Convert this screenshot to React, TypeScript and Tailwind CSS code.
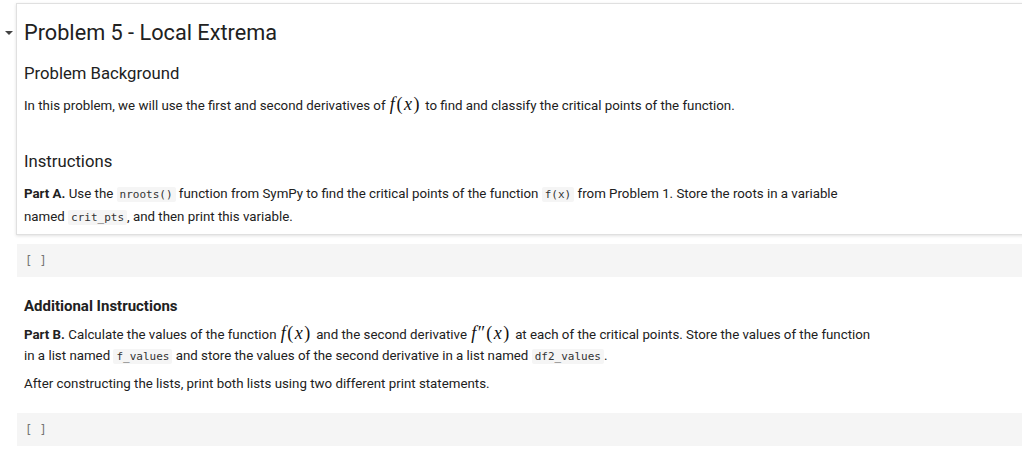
import React from "react";

const Math = ({ children }: { children: React.ReactNode }) => (
  <span className="text-[18px] leading-[1] tracking-[1.5px] text-[#111] mx-[1px]" style={{ fontFamily: '"Liberation Serif", "DejaVu Serif", serif' }}>
    {children}
  </span>
);

const Code = ({ children }: { children: React.ReactNode }) => (
  <code className="bg-[#f5f5f5] px-[3px] py-[1px] rounded-[2px] text-[11px] leading-[1] text-[#333] [font-family:'DejaVu_Sans_Mono',monospace]">
    {children}
  </code>
);

const Fx = () => (
  <Math>
    <i>f</i>(<i>x</i>)
  </Math>
);

const CodeCell = () => (
  <div className="ml-[17px] h-[33px] bg-[#f5f5f5] flex items-center pl-[8px]">
    <span className="text-[12px] text-[#757575] [font-family:'DejaVu_Sans_Mono',monospace]">[ ]</span>
  </div>
);

export default function App() {
  return (
    <div className="w-[1022px] h-[460px] bg-white overflow-hidden text-[#212121] [font-family:Roboto,'Noto_Sans',sans-serif]">
      <div className="pt-[3px]">
        <div className="relative ml-[16px] mr-[-10px] bg-white border border-[#e0e0e0] shadow-[0_1px_3px_rgba(0,0,0,0.12)] pl-[7px] pt-[15px] pb-[6px]">
          <span className="absolute left-[-12px] top-[27px] w-0 h-0 border-l-[4px] border-r-[4px] border-t-[4px] border-l-transparent border-r-transparent border-t-[#444]" />
          <h1 className="text-[21.7px] leading-[28px] font-normal text-[#212121]">Problem 5 - Local Extrema</h1>
          <h2 className="mt-[15px] text-[16.7px] leading-[24px] font-normal text-[#212121]">Problem Background</h2>
          <p className="mt-[9px] text-[13.3px] leading-[20px] text-[#212121]">
            In this problem, we will use the first and second derivatives of <Fx /> to find and classify the critical points of the function.
          </p>
          <h2 className="mt-[34px] text-[16.7px] leading-[24px] font-normal text-[#212121]">Instructions</h2>
          <p className="mt-[8px] text-[13.3px] leading-[23px]">
            <b className="font-bold">Part A.</b> Use the <Code>nroots()</Code> function from SymPy to find the critical points of the function <Code>f(x)</Code> from Problem 1. Store the roots in a variable
            <br />
            named <Code>crit_pts</Code>, and then print this variable.
          </p>
        </div>
      </div>
      <div className="mt-[9px]">
        <CodeCell />
      </div>
      <div className="pl-[24px]">
        <h3 className="mt-[19px] text-[15px] leading-[20px] font-bold">Additional Instructions</h3>
        <p className="mt-[8px] text-[13.3px] leading-[21px]">
          <b className="font-bold">Part B.</b> Calculate the values of the function <Fx /> and the second derivative{" "}
          <Math>
            <i>f</i>
            <span className="tracking-[1px]">″</span>(<i>x</i>)
          </Math>{" "}
          at each of the critical points. Store the values of the function
          <br />
          in a list named <Code>f_values</Code> and store the values of the second derivative in a list named <Code>df2_values</Code>.
        </p>
        <p className="mt-[7px] text-[13.3px] leading-[21px]">After constructing the lists, print both lists using two different print statements.</p>
      </div>
      <div className="mt-[19px]">
        <CodeCell />
      </div>
    </div>
  );
}
